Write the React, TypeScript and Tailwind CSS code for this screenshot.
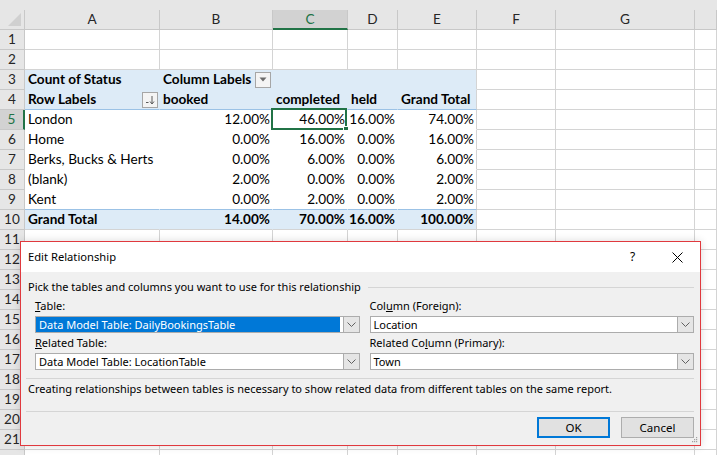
import React from "react";

type C = { t?: string; b?: boolean; r?: boolean; btn?: "filter" | "sort" };

const COLS = ["A", "B", "C", "D", "E", "F", "G", ""];

const data: Record<number, C[]> = {
  3: [{ t: "Count of Status", b: true }, { t: "Column Labels", b: true, btn: "filter" }, {}, {}, {}],
  4: [
    { t: "Row Labels", b: true, btn: "sort" },
    { t: "booked", b: true },
    { t: "completed", b: true },
    { t: "held", b: true },
    { t: "Grand Total", b: true },
  ],
  5: [{ t: "London" }, { t: "12.00%", r: true }, { t: "46.00%", r: true }, { t: "16.00%", r: true }, { t: "74.00%", r: true }],
  6: [{ t: "Home" }, { t: "0.00%", r: true }, { t: "16.00%", r: true }, { t: "0.00%", r: true }, { t: "16.00%", r: true }],
  7: [{ t: "Berks, Bucks & Herts" }, { t: "0.00%", r: true }, { t: "6.00%", r: true }, { t: "0.00%", r: true }, { t: "6.00%", r: true }],
  8: [{ t: "(blank)" }, { t: "2.00%", r: true }, { t: "0.00%", r: true }, { t: "0.00%", r: true }, { t: "2.00%", r: true }],
  9: [{ t: "Kent" }, { t: "0.00%", r: true }, { t: "2.00%", r: true }, { t: "0.00%", r: true }, { t: "2.00%", r: true }],
  10: [
    { t: "Grand Total", b: true },
    { t: "14.00%", b: true, r: true },
    { t: "70.00%", b: true, r: true },
    { t: "16.00%", b: true, r: true },
    { t: "100.00%", b: true, r: true },
  ],
};

const GRID = "grid grid-cols-[25px_135px_113px_75px_50px_79px_79px_139px_22px]";

function FilterBtn() {
  return (
    <div className="w-[16px] h-[16px] mr-[1px] shrink-0 border border-[#a6a6a6] bg-[#f4f4f4] flex items-center justify-center">
      <svg width="8" height="5" viewBox="0 0 8 5">
        <path d="M0.5 0.5 L7.5 0.5 L4 4.5 Z" fill="#6b6b6b" />
      </svg>
    </div>
  );
}

function SortBtn() {
  return (
    <div className="w-[16px] h-[16px] mr-[1px] shrink-0 border border-[#a6a6a6] bg-[#f4f4f4] flex items-center justify-center">
      <svg width="12" height="12" viewBox="0 0 12 12">
        <path d="M2 8.5 H4.5" stroke="#5a5a5a" strokeWidth="1" />
        <path d="M8 2 V9.5" stroke="#5a5a5a" strokeWidth="1" />
        <path d="M6 7.5 L8 10 L10 7.5" stroke="#5a5a5a" strokeWidth="1" fill="none" />
      </svg>
    </div>
  );
}

function Cell({ row, col }: { row: number; col: number }) {
  const inPivot = row >= 3 && row <= 10 && col <= 4;
  const blue = inPivot && (row === 3 || row === 4 || row === 10);
  const spec: C = (data[row] && data[row][col]) || {};
  const bg = blue ? "bg-[#ddebf7]" : "bg-white";
  const right = !inPivot || col === 4 ? "border-r-[#d4d4d4]" : blue ? "border-r-[#ddebf7]" : "border-r-white";
  const bottom = !inPivot
    ? "border-b-[#d4d4d4]"
    : row === 4 || row === 9
    ? "border-b-[#9bc2e6]"
    : row === 10
    ? "border-b-[#d4d4d4]"
    : blue
    ? "border-b-[#ddebf7]"
    : "border-b-white";
  const selected = row === 5 && col === 2;
  return (
    <div className={`relative h-[20px] border-r border-b ${bg} ${right} ${bottom} flex items-center min-w-0`}>
      {spec.t !== undefined && (
        <div
          className={`flex-1 whitespace-nowrap overflow-visible leading-[19px] ${spec.r ? "text-right pr-[2px]" : "pl-[3px]"} ${
            spec.b ? "font-bold" : ""
          }`}
        >
          {spec.t}
        </div>
      )}
      {spec.btn === "filter" && <FilterBtn />}
      {spec.btn === "sort" && <SortBtn />}
      {selected && (
        <div className="absolute -left-[2px] -top-[2px] right-0 bottom-[-1px] border-2 border-[#217346] pointer-events-none">
          <div className="absolute -right-[4px] -bottom-[4px] w-[6px] h-[6px] bg-[#217346] border border-white" />
        </div>
      )}
    </div>
  );
}

function Sheet() {
  const rows = Array.from({ length: 22 }, (_, i) => i + 1);
  return (
    <div className="font-['Lato',sans-serif] text-[13.6px] text-black">
      <div className="h-[10px] bg-[#e6e6e6]" />
      <div className={`${GRID} h-[20px]`}>
        <div className="relative bg-[#e6e6e6] border-r border-b border-[#c8c8c8]">
          <svg className="absolute right-[3px] bottom-[3px]" width="13" height="13" viewBox="0 0 13 13">
            <path d="M13 0 L13 13 L0 13 Z" fill="#d0d0d0" />
          </svg>
        </div>
        {COLS.map((c, i) =>
          i === 2 ? (
            <div
              key={i}
              className="bg-[#d2d2d2] border-r border-[#c8c8c8] border-b-2 border-b-[#217346] text-[#217346] flex items-center justify-center leading-[18px]"
            >
              {c}
            </div>
          ) : (
            <div
              key={i}
              className="bg-[#e6e6e6] border-r border-b border-[#c8c8c8] text-[#262626] flex items-center justify-center leading-[19px]"
            >
              {c}
            </div>
          )
        )}
      </div>
      {rows.map((r) => (
        <div key={r} className={`${GRID} h-[20px]`}>
          {r === 5 ? (
            <div className="bg-[#d2d2d2] border-b border-b-[#c8c8c8] border-r-2 border-r-[#217346] text-[#217346] flex items-center justify-center leading-[19px]">
              {r}
            </div>
          ) : (
            <div className="bg-[#e6e6e6] border-r border-b border-[#c8c8c8] text-[#262626] flex items-center justify-center leading-[19px]">
              {r <= 21 ? r : ""}
            </div>
          )}
          {COLS.map((_, ci) => (
            <Cell key={ci} row={r} col={ci} />
          ))}
        </div>
      ))}
    </div>
  );
}

function Chevron() {
  return (
    <svg width="9" height="5" viewBox="0 0 9 5">
      <path d="M0.5 0.5 L4.5 4.5 L8.5 0.5" stroke="#606060" strokeWidth="1" fill="none" />
    </svg>
  );
}

function Select({ value, selected }: { value: string; selected?: boolean }) {
  return (
    <div className="h-[17px] border border-[#acacac] bg-white flex">
      <div className="flex-1 min-w-0 flex">
        {selected ? (
          <div className="flex-1 bg-[#0078d7] text-white pl-[3px] leading-[15px] whitespace-nowrap mr-[3px]">{value}</div>
        ) : (
          <div className="flex-1 pl-[3px] leading-[15px] whitespace-nowrap">{value}</div>
        )}
      </div>
      <div className="w-[16px] border-l border-[#acacac] bg-[#e5e5e5] flex items-center justify-center">
        <Chevron />
      </div>
    </div>
  );
}

function Dialog() {
  return (
    <div className="absolute left-[20px] top-[241px] w-[681px] h-[205px] border border-[#e0393e] bg-[#f0f0f0] flex flex-col font-['Segoe_UI','Noto_Sans',sans-serif] text-[11px] text-black shadow-[0_0_8px_rgba(0,0,0,0.15)]">
      <div className="h-[30px] bg-white flex items-center shrink-0">
        <div className="pl-[7px] flex-1 text-[11.2px]">Edit Relationship</div>
        <div className="w-[45px] h-full flex items-center justify-center text-[12px]">?</div>
        <div className="w-[45px] h-full flex items-center justify-center">
          <svg width="11" height="11" viewBox="0 0 11 11">
            <path d="M0.5 0.5 L10.5 10.5 M10.5 0.5 L0.5 10.5" stroke="#000" strokeWidth="1" />
          </svg>
        </div>
      </div>
      <div className="relative flex-1 flex flex-col">
        <div className="mt-[7px] h-[16px] flex items-center pl-[7px] pr-[6px]">
          <span className="whitespace-nowrap leading-[16px]">Pick the tables and columns you want to use for this relationship</span>
          <div className="flex-1 h-px bg-[#d5d5d5] ml-[7px]" />
        </div>
        <div className="mt-[3px] grid grid-cols-2 gap-x-[10px] gap-y-[2px] pl-[14px] pr-[6px]">
          <div className="h-[16px] leading-[16px]">
            <span className="underline">T</span>able:
          </div>
          <div className="h-[16px] leading-[16px]">
            Col<span className="underline">u</span>mn (Foreign):
          </div>
          <Select value="Data Model Table: DailyBookingsTable" selected />
          <Select value="Location" />
          <div className="h-[16px] leading-[16px]">
            <span className="underline">R</span>elated Table:
          </div>
          <div className="h-[16px] leading-[16px]">
            Related Co<span className="underline">l</span>umn (Primary):
          </div>
          <Select value="Data Model Table: LocationTable" />
          <Select value="Town" />
        </div>
        <div className="mt-[8px] h-px bg-[#d5d5d5] ml-[5px] mr-[6px]" />
        <div className="mt-[2px] h-[16px] leading-[16px] pl-[7px] whitespace-nowrap">
          Creating relationships between tables is necessary to show related data from different tables on the same report.
        </div>
        <div className="mt-[14px] h-px bg-[#d5d5d5] ml-[5px] mr-[6px]" />
        <div className="mt-[5px] flex justify-end gap-[11px] pr-[6px]">
          <div className="w-[73px] h-[21px] border-2 border-[#0078d7] bg-[#e1e1e1] flex items-center justify-center text-[11.5px]">OK</div>
          <div className="w-[73px] h-[21px] border border-[#adadad] bg-[#e1e1e1] flex items-center justify-center text-[11.5px]">Cancel</div>
        </div>
        <svg className="absolute right-[2px] bottom-[2px]" width="7" height="7" viewBox="0 0 7 7">
          <rect x="5" y="1" width="1.2" height="1.2" fill="#a0a0a0" />
          <rect x="3" y="3" width="1.2" height="1.2" fill="#a0a0a0" />
          <rect x="5" y="3" width="1.2" height="1.2" fill="#a0a0a0" />
          <rect x="1" y="5" width="1.2" height="1.2" fill="#a0a0a0" />
          <rect x="3" y="5" width="1.2" height="1.2" fill="#a0a0a0" />
          <rect x="5" y="5" width="1.2" height="1.2" fill="#a0a0a0" />
        </svg>
      </div>
    </div>
  );
}

export default function App() {
  return (
    <div className="relative w-[717px] h-[455px] overflow-hidden bg-white">
      <Sheet />
      <Dialog />
    </div>
  );
}
